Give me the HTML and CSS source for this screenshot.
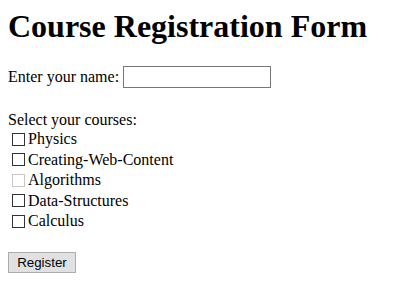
FILE: index.html
```html
<!DOCTYPE html>
<html>
<head>
<meta charset="utf-8">
<link rel="stylesheet" href="styles.css">
</head>
<body>
<h1 class="title">Course Registration Form</h1>
<form class="form">
  <div class="name-row">Enter your name: <input type="text" class="name-input"></div>
  <div class="courses-label">Select your courses:</div>
  <div class="course"><input type="checkbox" class="cb"> Physics</div>
  <div class="course"><input type="checkbox" class="cb"> Creating-Web-Content</div>
  <div class="course"><input type="checkbox" class="cb" disabled> Algorithms</div>
  <div class="course"><input type="checkbox" class="cb"> Data-Structures</div>
  <div class="course"><input type="checkbox" class="cb"> Calculus</div>
  <div class="actions"><button type="button" class="btn">Register</button></div>
</form>
</body>
</html>
```
FILE: styles.css
```css
body {
  margin: 8px;
  font-family: "Liberation Serif", "Times New Roman", serif;
  font-size: 16px;
  color: #000;
  background: #fff;
}
.title {
  font-size: 32px;
  font-weight: bold;
  margin: 0 0 21px 0;
  line-height: 37px;
}
.name-row {
  height: 22px;
  display: flex;
  align-items: center;
}
.name-input {
  box-sizing: border-box;
  width: 148px;
  height: 22px;
  margin: 0 0 0 4px;
  border: 1px solid #767676;
  padding: 0;
  font-size: 13px;
}
.courses-label {
  margin-top: 23px;
  line-height: 18px;
}
.course {
  height: 20.5px;
  display: flex;
  align-items: center;
  line-height: 18px;
}
.cb {
  appearance: none;
  -webkit-appearance: none;
  box-sizing: border-box;
  width: 13px;
  height: 13px;
  margin: 0 3px 0 4px;
  border: 1px solid #333;
  background: #fff;
  border-radius: 0;
}
.cb:disabled {
  border-color: #c8c8c8;
}
.actions {
  margin-top: 20px;
}
.btn {
  box-sizing: border-box;
  width: 68px;
  height: 21px;
  margin: 0;
  padding: 0;
  background: #e1e1e1;
  border: 1px solid #adadad;
  border-radius: 0;
  font-family: "Liberation Sans", Arial, sans-serif;
  font-size: 13.33px;
  color: #000;
}
```
